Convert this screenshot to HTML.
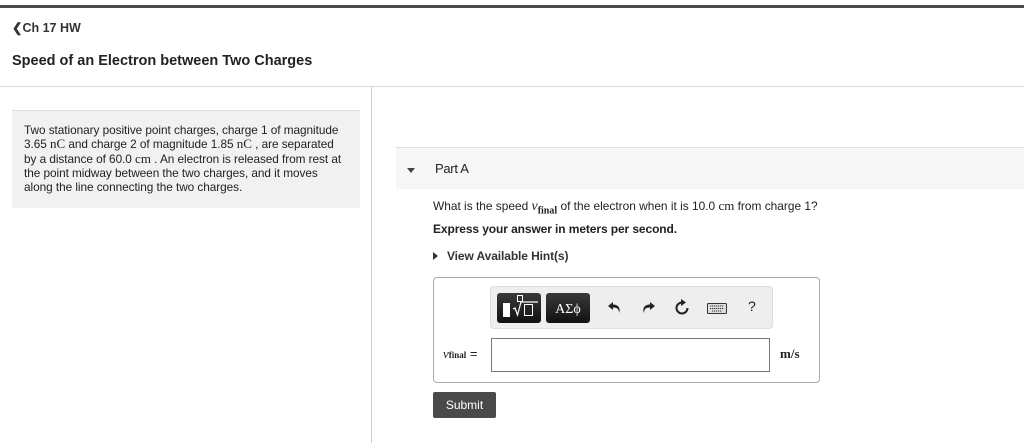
<!DOCTYPE html>
<html><head><meta charset="utf-8"><style>
*{margin:0;padding:0;box-sizing:border-box}
body{width:1024px;height:443px;background:#fff;font-family:"Liberation Sans",Arial,sans-serif;color:#222;position:relative;overflow:hidden}
.a{position:absolute}
.m{font-family:"Liberation Serif",serif}
</style></head><body>
<div class="a" style="left:0;top:5px;width:1024px;height:3px;background:#4a4a4a"></div>
<div class="a" style="left:12px;top:20px;font-size:12.5px;font-weight:bold;color:#333">&#10094;Ch 17 HW</div>
<div class="a" style="left:12px;top:53px;font-size:14.5px;font-weight:bold;color:#222">Speed of an Electron between Two Charges</div>
<div class="a" style="left:0;top:86px;width:1024px;height:1px;background:#d8d8d8"></div>
<div class="a" style="left:371px;top:87px;width:1px;height:356px;background:#d0d0d0"></div>
<div class="a" style="left:12px;top:110px;width:348px;height:98px;background:#f1f1f1;border-top:1px solid #ddd"></div>
<div class="a" style="left:24px;top:123px;width:324px;font-size:11.8px;letter-spacing:-0.05px;line-height:14.3px;color:#222">Two stationary positive point charges, charge 1 of magnitude 3.65 <span class="m" style="font-size:13px;letter-spacing:0">nC</span> and charge 2 of magnitude 1.85 <span class="m" style="font-size:13px;letter-spacing:0">nC</span> , are separated by a distance of 60.0 <span class="m" style="font-size:13px;letter-spacing:0">cm</span> . An electron is released from rest at the point midway between the two charges, and it moves along the line connecting the two charges.</div>

<div class="a" style="left:396px;top:147px;width:628px;height:42px;background:#f6f6f6;border-top:1px solid #ddd"></div>
<div class="a" style="left:407px;top:168px;width:0;height:0;border-left:4px solid transparent;border-right:4px solid transparent;border-top:5px solid #444"></div>
<div class="a" style="left:435px;top:161px;font-size:13px;letter-spacing:-0.3px;color:#222">Part A</div>
<div class="a" style="left:433px;top:198px;font-size:11.9px;letter-spacing:0;color:#222">What is the speed <i class="m" style="font-size:14px">v</i><sub class="m" style="font-size:10px;font-weight:bold">final</sub> of the electron when it is 10.0 <span class="m" style="font-size:13px">cm</span> from charge 1?</div>
<div class="a" style="left:433px;top:222px;font-size:12px;font-weight:bold;letter-spacing:-0.1px;color:#222">Express your answer in meters per second.</div>
<div class="a" style="left:433px;top:252px;width:0;height:0;border-top:4px solid transparent;border-bottom:4px solid transparent;border-left:5px solid #333"></div>
<div class="a" style="left:447px;top:249px;font-size:12px;font-weight:bold;letter-spacing:-0.1px;color:#333">View Available Hint(s)</div>

<div class="a" style="left:433px;top:277px;width:387px;height:106px;border:1px solid #aaa;border-radius:4px"></div>
<div class="a" style="left:490px;top:286px;width:283px;height:43px;background:#eee;border:1px solid #ddd;border-radius:4px"></div>
<div class="a" style="left:497px;top:293px;width:44px;height:30px;background:linear-gradient(#3a3a3a,#111);border-radius:3px"></div>
<div class="a" style="left:503px;top:303px;width:7px;height:14px;background:#fff"></div>
<svg class="a" style="left:512px;top:294px" width="26" height="26" viewBox="0 0 26 26"><rect x="5.5" y="1.5" width="5" height="6" fill="none" stroke="#fff"/><path d="M1 15 L3 14 L5.5 21 L9 8 H26" fill="none" stroke="#fff" stroke-width="1.2"/><rect x="12.5" y="10.5" width="8" height="11" fill="none" stroke="#fff"/></svg>
<div class="a" style="left:546px;top:293px;width:44px;height:30px;background:linear-gradient(#3a3a3a,#111);border-radius:3px;color:#fff;font-size:14px;text-align:center;line-height:30px"><span class="m">ΑΣϕ</span></div>
<svg class="a" style="left:607px;top:301px" width="16" height="14" viewBox="0 0 16 14"><path d="M6 1 L1 5 L6 9 V6.5 C10 6.5 12 8 12 12 C14 7 11 3.5 6 3.5Z" fill="#222"/></svg>
<svg class="a" style="left:640px;top:301px" width="16" height="14" viewBox="0 0 16 14"><path d="M10 1 L15 5 L10 9 V6.5 C6 6.5 4 8 4 12 C2 7 5 3.5 10 3.5Z" fill="#222"/></svg>
<svg class="a" style="left:674px;top:299px" width="16" height="17" viewBox="0 0 16 17"><path d="M8 3.5 A5.5 5.5 0 1 0 13.5 9" fill="none" stroke="#222" stroke-width="2"/><path d="M7 0 L12 3.5 L7 7Z" fill="#222"/></svg>
<svg class="a" style="left:707px;top:303px" width="20" height="11" viewBox="0 0 20 11"><rect x="0.5" y="0.5" width="19" height="10" rx="1" fill="#ddd" stroke="#333"/><path d="M3 3h14M3 5.5h14M5 8h10" stroke="#333" stroke-width="1" stroke-dasharray="1.2 0.8"/></svg>
<div class="a" style="left:748px;top:298px;font-size:14px;color:#222">?</div>

<div class="a" style="left:443px;top:346px;font-size:13px;color:#222"><i class="m">v</i><span class="m" style="font-size:9px;font-weight:bold">final</span> =</div>
<div class="a" style="left:491px;top:338px;width:279px;height:34px;border:1px solid #777;background:#fff"></div>
<div class="a m" style="left:780px;top:346px;font-size:13px;font-weight:bold;color:#222">m/s</div>
<div class="a" style="left:433px;top:392px;width:63px;height:26px;background:#4a4a4a;border-radius:2px;color:#fff;font-size:12px;text-align:center;line-height:26px">Submit</div>
</body></html>
